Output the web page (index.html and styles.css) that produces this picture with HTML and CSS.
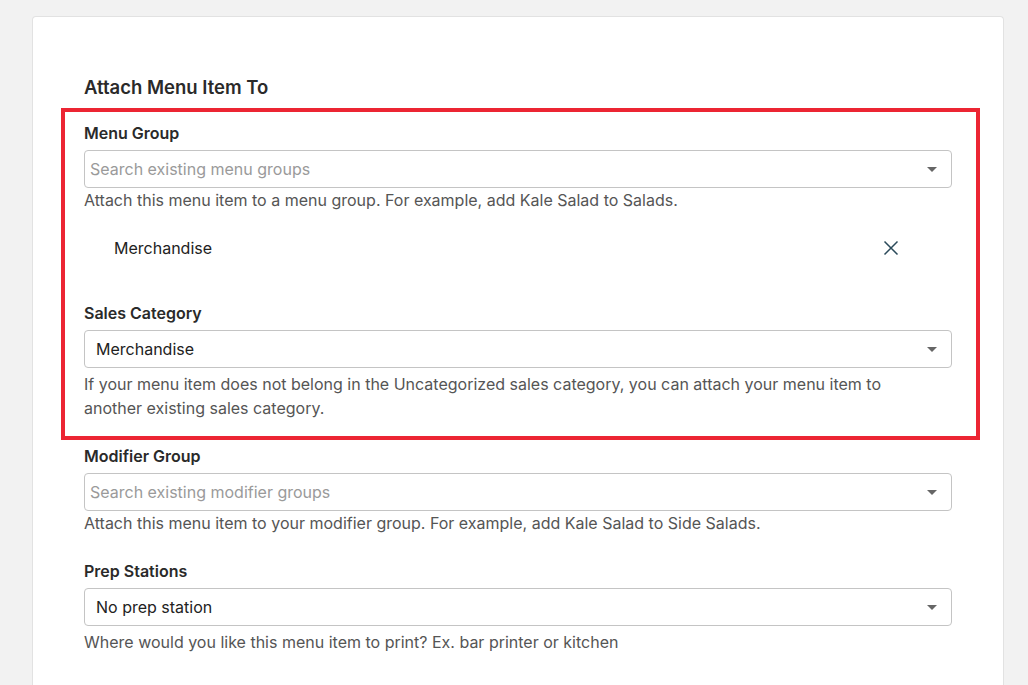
FILE: index.html
```html
<!DOCTYPE html>
<html lang="en">
<head>
    <meta charset="UTF-8">
    <meta name="viewport" content="width=device-width, initial-scale=1.0">
    <title>Attach Menu Item To</title>
    <link rel="stylesheet" href="styles.css">
</head>
<body>
    <div class="card">
        <h2 class="section-title">Attach Menu Item To</h2>

        <div class="highlight">
            <div class="field">
                <label class="field-label">Menu Group</label>
                <div class="select">
                    <span class="placeholder">Search existing menu groups</span>
                    <span class="caret"></span>
                </div>
                <p class="help">Attach this menu item to a menu group. For example, add Kale Salad to Salads.</p>
            </div>

            <div class="chip-row">
                <span class="chip-name">Merchandise</span>
                <svg class="remove" width="16" height="16" viewBox="0 0 16 16">
                    <path d="M1.5 1.5 L14.5 14.5 M14.5 1.5 L1.5 14.5" stroke="#2b4a5a" stroke-width="1.5" fill="none"/>
                </svg>
            </div>

            <div class="field">
                <label class="field-label">Sales Category</label>
                <div class="select">
                    <span class="value">Merchandise</span>
                    <span class="caret"></span>
                </div>
                <p class="help help-gap">If your menu item does not belong in the Uncategorized sales category, you can attach your menu item to another existing sales category.</p>
            </div>
        </div>

        <div class="field">
            <label class="field-label">Modifier Group</label>
            <div class="select">
                <span class="placeholder">Search existing modifier groups</span>
                <span class="caret"></span>
            </div>
            <p class="help">Attach this menu item to your modifier group. For example, add Kale Salad to Side Salads.</p>
        </div>

        <div class="field">
            <label class="field-label">Prep Stations</label>
            <div class="select">
                <span class="value">No prep station</span>
                <span class="caret"></span>
            </div>
            <p class="help help-gap">Where would you like this menu item to print? Ex. bar printer or kitchen</p>
        </div>
    </div>
</body>
</html>
```

FILE: styles.css
```css
body {
    margin: 0;
    padding: 16px 24px 0 32px;
    background-color: #f2f2f2;
    font-family: Inter, "Liberation Sans", sans-serif;
    color: #222;
}

.card {
    background-color: #fff;
    border: 1px solid #e2e2e2;
    border-bottom: none;
    border-radius: 4px 4px 0 0;
    padding: 58px 51px 60px 51px;
}

.section-title {
    margin: 0 0 9px 0;
    font-size: 18.5px;
    line-height: 24px;
    font-weight: 600;
    color: #2a2a2a;
}

.highlight {
    border: 4px solid #ec2533;
    margin: 0 -28px 6px -23px;
    padding: 11px 24px 16px 19px;
}

.field {
    margin-bottom: 26px;
}

.highlight .field {
    margin-bottom: 0;
}

.field-label {
    display: block;
    font-size: 16px;
    line-height: 20px;
    font-weight: 600;
    color: #2a2a2a;
    margin-bottom: 7px;
}

.select {
    display: flex;
    align-items: center;
    justify-content: space-between;
    height: 36px;
    border: 1px solid #c4c4c4;
    border-radius: 4px;
    padding: 0 14px 0 5px;
    font-size: 16px;
}

.placeholder {
    color: #9a9a9a;
}

.value {
    color: #222;
    padding-left: 6px;
}

.caret {
    width: 0;
    height: 0;
    border-left: 5px solid transparent;
    border-right: 5px solid transparent;
    border-top: 5px solid #666;
}

.help {
    margin: 0;
    max-width: 830px;
    font-size: 16px;
    line-height: 24px;
    color: #555;
}

.help-gap {
    margin-top: 4px;
}

.chip-row {
    display: flex;
    align-items: center;
    justify-content: space-between;
    height: 50px;
    margin: 11px 0 30px 0;
    padding: 0 53px 0 30px;
}

.chip-name {
    font-size: 16px;
    color: #222;
}

.remove {
    display: block;
}
```
